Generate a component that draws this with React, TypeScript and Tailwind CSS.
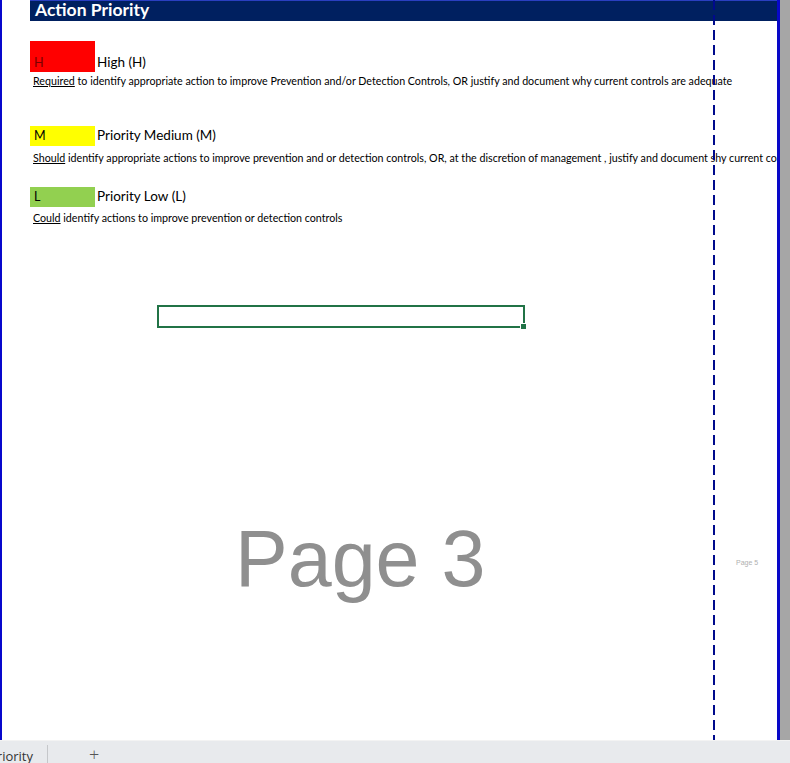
import React from "react";

const cal = { fontFamily: "Lato, 'Open Sans', sans-serif" };

export default function App() {
  return (
    <div className="w-[790px] h-[763px] flex flex-col bg-white overflow-hidden" style={cal}>
      <div className="h-[740px] flex flex-row relative">
        <div className="w-[2px] bg-[#0808cc]" />
        <div className="flex-1 min-w-0 overflow-hidden bg-white flex flex-col pl-[28px]">
          <div className="h-[21px] bg-[#002060] border-t border-[#2a3fc0] flex items-center pl-[5px]">
            <span className="text-white font-bold text-[17.5px] leading-none -mt-[2px]">Action Priority</span>
          </div>

          <div className="mt-[20px] flex flex-row items-end">
            <div className="w-[65px] h-[31px] bg-[#ff0000] flex items-end pl-[4px] pb-[3px]">
              <span className="text-[12.5px] leading-none text-[#7a0000]">H</span>
            </div>
            <span className="ml-[2px] text-[13.5px] leading-none text-black pb-[3px]">High (H)</span>
          </div>
          <div className="mt-[3px] pl-[3px] text-[10.7px] leading-[12px] text-black whitespace-nowrap">
            <span className="underline">Required</span> to identify appropriate action to improve Prevention and/or Detection Controls, OR justify and document why current controls are adequate
          </div>

          <div className="mt-[39px] flex flex-row items-center">
            <div className="w-[65px] h-[20px] bg-[#ffff00] flex items-center pl-[4px]">
              <span className="text-[12.5px] leading-none text-black">M</span>
            </div>
            <span className="ml-[2px] text-[13.5px] leading-none text-black">Priority Medium (M)</span>
          </div>
          <div className="mt-[6px] pl-[3px] text-[10.7px] leading-[12px] text-black whitespace-nowrap">
            <span className="underline">Should</span> identify appropriate actions to improve prevention and or detection controls, OR, at the discretion of management , justify and document shy current controls are adequate
          </div>

          <div className="mt-[23px] flex flex-row items-center">
            <div className="w-[65px] h-[20px] bg-[#92d050] flex items-center pl-[4px]">
              <span className="text-[12.5px] leading-none text-black">L</span>
            </div>
            <span className="ml-[2px] text-[13.5px] leading-none text-black">Priority Low (L)</span>
          </div>
          <div className="mt-[5px] pl-[3px] text-[10.7px] leading-[12px] text-black whitespace-nowrap">
            <span className="underline">Could</span> identify actions to improve prevention or detection controls
          </div>

          <div className="mt-[81px] ml-[127px] w-[368px] h-[23px] border-2 border-[#217346] relative">
            <div className="absolute right-[-4px] bottom-[-4px] w-[5px] h-[5px] bg-[#217346] border border-white box-content" />
          </div>

          <div className="mt-[191px] ml-[205px] text-[79px] leading-none text-[#8f8f8f] whitespace-nowrap" style={{ fontFamily: "'Liberation Sans', Arial, sans-serif" }}>
            Page 3
          </div>
        </div>
        <div className="w-[3px] bg-[#0808c8]" />
        <div className="w-[10px] bg-[#a6a6a6]" />

        <div
          className="absolute left-[713px] top-0 h-[740px] w-[2px]"
          style={{ backgroundImage: "repeating-linear-gradient(to bottom, #000a8c 0px, #000a8c 10px, transparent 10px, transparent 15px)" }}
        />
        <div className="absolute left-[736px] top-[559px] text-[7px] text-[#b0b0b0] leading-none" style={{ fontFamily: "'Liberation Sans', Arial, sans-serif" }}>
          Page 5
        </div>
      </div>

      <div className="h-[23px] bg-[#e8eaed] border-t border-[#f3f3f3] flex flex-row items-center" style={{ fontFamily: "'Open Sans', 'Liberation Sans', sans-serif" }}>
        <div className="w-[47px] h-full overflow-hidden relative">
          <span className="absolute right-[14px] bottom-[-3px] text-[13px] leading-[20px] text-[#333333] whitespace-nowrap">Action Priority</span>
        </div>
        <div className="w-px h-[18px] bg-[#c5c7ca] self-end" />
        <div className="ml-[41px] text-[#555] text-[18px] leading-[16px] font-light mt-[4px]">+</div>
      </div>
    </div>
  );
}
